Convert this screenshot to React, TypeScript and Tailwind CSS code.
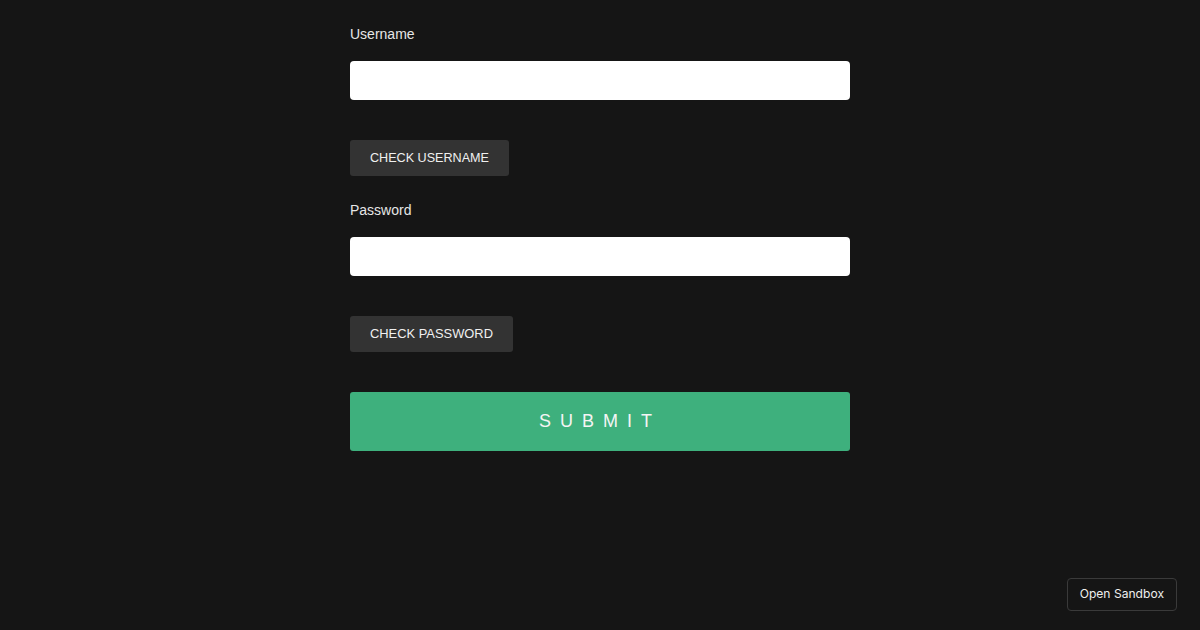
import React, { useState } from 'react';

export default function App() {
  const [username, setUsername] = useState('');
  const [password, setPassword] = useState('');

  return <div className="min-h-[630px] w-full bg-[#151515] font-['Liberation_Sans',Arial,sans-serif] relative">
      <form onSubmit={e => e.preventDefault()} className="w-[500px] mx-auto pt-[24px] flex flex-col">
        <label htmlFor="username" className="block text-[14px] leading-[20px] text-[#e6e6e6]">
          Username
        </label>
        <input id="username" type="text" value={username} onChange={e => setUsername(e.target.value)} className="mt-[17px] h-[39px] w-full rounded-[4px] bg-white px-3 text-[14px] text-black outline-none" />
        <button type="button" className="mt-[40px] self-start h-[36px] px-[20px] rounded-[3px] bg-[#333333] text-[12.6px] text-[#f0f0f0]">
          CHECK USERNAME
        </button>

        <label htmlFor="password" className="mt-[24px] block text-[14px] leading-[20px] text-[#e6e6e6]">
          Password
        </label>
        <input id="password" type="password" value={password} onChange={e => setPassword(e.target.value)} className="mt-[17px] h-[39px] w-full rounded-[4px] bg-white px-3 text-[14px] text-black outline-none" />
        <button type="button" className="mt-[40px] self-start h-[36px] px-[20px] rounded-[3px] bg-[#333333] text-[12.9px] text-[#f0f0f0]">
          CHECK PASSWORD
        </button>

        <button type="submit" className="mt-[40px] h-[59px] w-full rounded-[3px] bg-[#3eb07d] text-[18px] tracking-[9px] text-[#f4f4f4]">
          SUBMIT
        </button>
      </form>

      <button type="button" className="absolute right-[23px] bottom-[19px] h-[33px] px-[12px] rounded-[4px] border border-[#3a3a3a] bg-[#151515] font-['Inter',sans-serif] text-[12.1px] text-[#eeeeee]">
        Open Sandbox
      </button>
    </div>;
}
